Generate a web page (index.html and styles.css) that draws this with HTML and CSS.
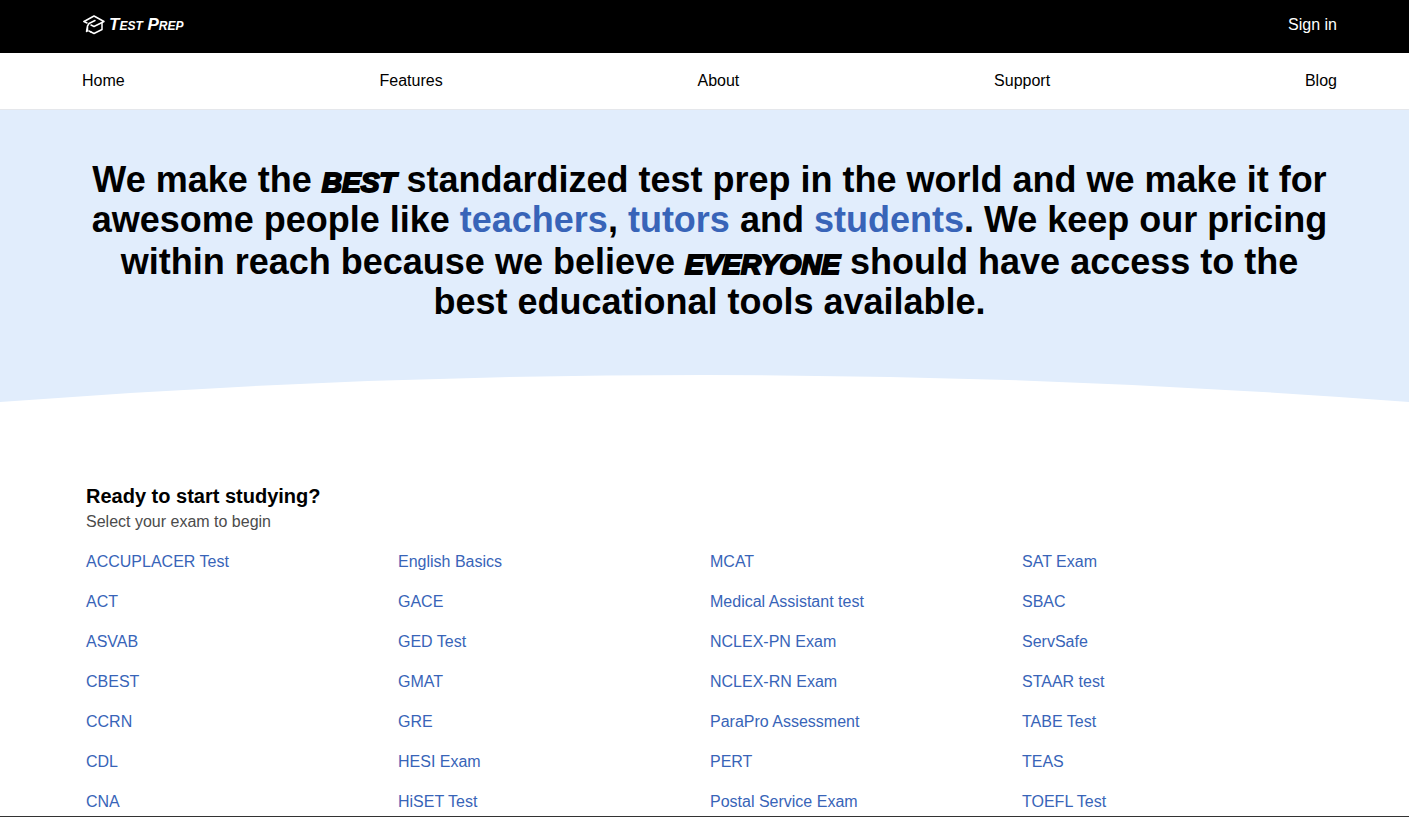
FILE: index.html
```
<!DOCTYPE html>
<html lang="en">
<head>
  <meta charset="UTF-8">
  <meta name="viewport" content="width=device-width, initial-scale=1">
  <title>Test Prep</title>
  <link rel="stylesheet" href="styles.css">
</head>
<body>
  <header class="topbar">
    <a class="logo" href="#">
      <svg class="logo-icon" viewBox="0 0 24 22" aria-hidden="true">
        <path d="M2 7.5 L12 2 L22 7.5 L12 12.5 L9 11"/>
        <path d="M2 7.5 L5 9 M9 18 L12 19.5 L20 15.5 V8.5"/>
        <path d="M13 6.5 L7 9.5 L5.5 12 V17 M5.5 12 L4.5 17.5 M7 17 L9 18"/>
      </svg>
      <span class="logo-text">Test Prep</span>
    </a>
    <a class="signin" href="#">Sign in</a>
  </header>

  <nav class="nav">
    <a href="#">Home</a>
    <a href="#">Features</a>
    <a href="#">About</a>
    <a href="#">Support</a>
    <a href="#">Blog</a>
  </nav>

  <section class="hero">
    <h1>We make the <em>BEST</em> standardized test prep in the world and we make it for awesome people like <a href="#">teachers</a>, <a href="#">tutors</a> and <a href="#">students</a>. We keep our pricing within reach because we believe <em>EVERYONE</em> should have access to the best educational tools available.</h1>
    <svg class="curve" viewBox="0 0 1420 28" preserveAspectRatio="none" aria-hidden="true">
      <path d="M0 28 Q710 -26 1420 28 Z"/>
    </svg>
  </section>

  <main class="exams">
    <h2>Ready to start studying?</h2>
    <p>Select your exam to begin</p>
    <div class="exam-grid">
      <ul>
        <li><a href="#">ACCUPLACER Test</a></li>
        <li><a href="#">ACT</a></li>
        <li><a href="#">ASVAB</a></li>
        <li><a href="#">CBEST</a></li>
        <li><a href="#">CCRN</a></li>
        <li><a href="#">CDL</a></li>
        <li><a href="#">CNA</a></li>
      </ul>
      <ul>
        <li><a href="#">English Basics</a></li>
        <li><a href="#">GACE</a></li>
        <li><a href="#">GED Test</a></li>
        <li><a href="#">GMAT</a></li>
        <li><a href="#">GRE</a></li>
        <li><a href="#">HESI Exam</a></li>
        <li><a href="#">HiSET Test</a></li>
      </ul>
      <ul>
        <li><a href="#">MCAT</a></li>
        <li><a href="#">Medical Assistant test</a></li>
        <li><a href="#">NCLEX-PN Exam</a></li>
        <li><a href="#">NCLEX-RN Exam</a></li>
        <li><a href="#">ParaPro Assessment</a></li>
        <li><a href="#">PERT</a></li>
        <li><a href="#">Postal Service Exam</a></li>
      </ul>
      <ul>
        <li><a href="#">SAT Exam</a></li>
        <li><a href="#">SBAC</a></li>
        <li><a href="#">ServSafe</a></li>
        <li><a href="#">STAAR test</a></li>
        <li><a href="#">TABE Test</a></li>
        <li><a href="#">TEAS</a></li>
        <li><a href="#">TOEFL Test</a></li>
      </ul>
    </div>
  </main>
</body>
</html>
```
FILE: styles.css
```
* {
  box-sizing: border-box;
}
body {
  margin: 0;
  font-family: "Liberation Sans", Arial, sans-serif;
  font-size: 16px;
  line-height: 24px;
  color: #000;
  background: #fff;
  border-bottom: 1px solid #333;
}
a {
  color: #3864b8;
  text-decoration: none;
}
h1, h2, p, ul {
  margin: 0;
  padding: 0;
}
.topbar {
  display: flex;
  justify-content: space-between;
  align-items: center;
  background: #000;
  padding: 13px 72px 16px 82px;
}
.logo {
  display: flex;
  align-items: center;
  gap: 3px;
  color: #fff;
}
.logo-icon {
  width: 24px;
  height: 22px;
  fill: none;
  stroke: #fff;
  stroke-width: 1.5;
  stroke-linejoin: round;
  stroke-linecap: round;
}
.logo-text {
  font-family: "Permanent Marker", "Liberation Sans", sans-serif;
  font-size: 17px;
  font-weight: bold;
  font-style: italic;
  font-variant: small-caps;
}
.signin {
  color: #fff;
}
.nav {
  display: flex;
  justify-content: space-between;
  padding: 16px 72px 16px 82px;
  border-bottom: 1px solid #e5e7eb;
}
.nav a {
  color: #000;
}
.hero {
  background: #e1edfc;
}
.hero h1 {
  padding: 48px 72px 52px 82px;
  font-size: 36px;
  line-height: 40px;
  text-align: center;
}
.hero em {
  display: inline-block;
  padding-top: 9px;
  font-family: "Permanent Marker", "Liberation Sans", sans-serif;
  font-size: 28px;
  line-height: 32px;
  -webkit-text-stroke: 2px #000;
}
.curve {
  display: block;
  width: 100%;
  height: 28px;
  fill: #fff;
}
.exams {
  padding: 82px 75px 2px 86px;
}
.exams h2 {
  font-size: 20px;
  line-height: 24px;
}
.exams p {
  margin: 2px 0 16px;
  color: #4b4b4b;
}
.exam-grid {
  display: grid;
  grid-template-columns: repeat(4, 1fr);
}
.exam-grid ul {
  display: flex;
  flex-direction: column;
  gap: 16px;
  list-style: none;
}
```
